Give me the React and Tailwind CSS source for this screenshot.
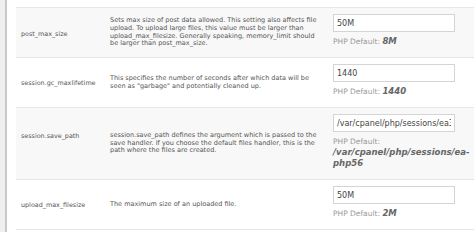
import React from 'react'

const rows = [
  {
    name: 'post_max_size',
    desc: 'Sets max size of post data allowed. This setting also affects file upload. To upload large files, this value must be larger than upload_max_filesize. Generally speaking, memory_limit should be larger than post_max_size.',
    value: '50M',
    def: '8M',
    bg: 'bg-[#f8f8f8]',
    labelPad: 'pt-[2px]',
  },
  {
    name: 'session.gc_maxlifetime',
    desc: 'This specifies the number of seconds after which data will be seen as "garbage" and potentially cleaned up.',
    value: '1440',
    def: '1440',
    bg: 'bg-white',
    labelPad: '',
  },
  {
    name: 'session.save_path',
    desc: 'session.save_path defines the argument which is passed to the save handler. If you choose the default files handler, this is the path where the files are created.',
    value: '/var/cpanel/php/sessions/ea3',
    def: '/var/cpanel/php/sessions/ea-php56',
    bg: 'bg-[#f8f8f8]',
    labelPad: 'pb-[16px]',
  },
  {
    name: 'upload_max_filesize',
    desc: 'The maximum size of an uploaded file.',
    value: '50M',
    def: '2M',
    bg: 'bg-white',
    labelPad: '',
  },
]

const App = () => {
  return (
    <div className="flex w-[474px] h-[232px] bg-white overflow-hidden font-['DejaVu_Sans',Verdana,sans-serif]">
      {/* left edge of the panel */}
      <div className="w-[5px] shrink-0 bg-[#efefef]" />
      <div className="w-[2px] shrink-0 bg-[#c8c8c8]" />
      <div className="w-[9px] shrink-0" />

      <div className="flex-1 pt-[7px]">
        <div className="border-t border-[#e6e6e6]">
          {rows.map((r) => (
            <div
              key={r.name}
              className={`grid grid-cols-[89px_223px_1fr] border-b border-[#e6e6e6] ${r.bg}`}
            >
              <div className={`flex items-center pl-[5px] text-[6.4px] leading-[8px] text-[#555] ${r.labelPad}`}>
                {r.name}
              </div>
              <div className="flex items-center px-[5px] text-[6.5px] leading-[7.8px] text-[#555]">
                <p>{r.desc}</p>
              </div>
              <div className="pl-[5px] pt-[6px] pb-[10px]">
                <input
                  readOnly
                  value={r.value}
                  className="block w-[122px] h-[18px] px-[3px] bg-white border border-[#d4d4d4] text-[8px] text-[#444] outline-none"
                />
                <p className="mt-[4px] text-[7.5px] leading-[11px] text-[#999]">
                  PHP Default:{' '}
                  <b className="italic text-[8.5px] text-[#666]">{r.def}</b>
                </p>
              </div>
            </div>
          ))}
        </div>
      </div>
    </div>
  )
}

export default App
